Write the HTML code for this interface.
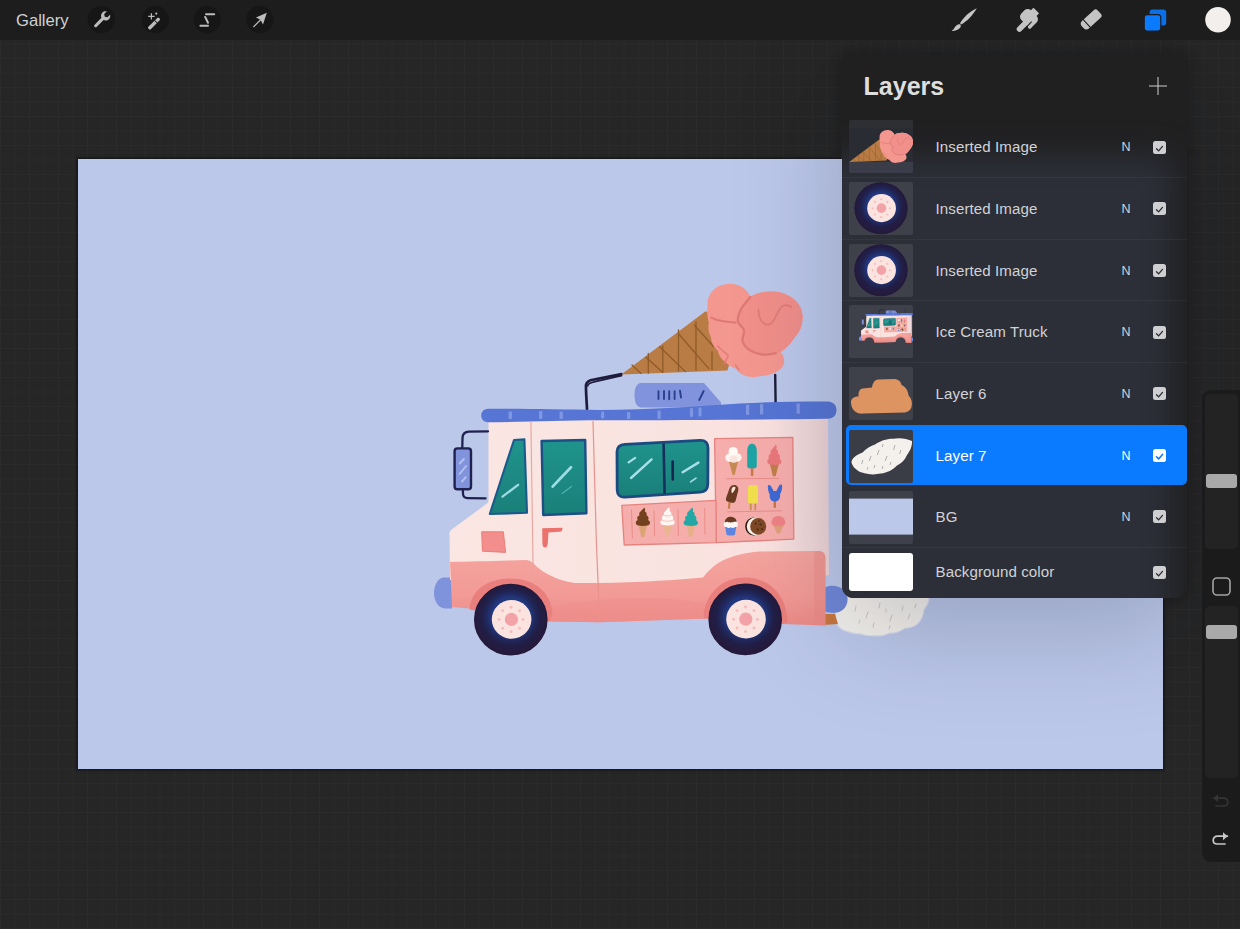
<!DOCTYPE html>
<html lang="en">
<head>
<meta charset="utf-8">
<title>Procreate - Ice Cream Truck</title>
<style>
*{box-sizing:border-box;margin:0;padding:0}
html,body{width:1240px;height:929px;overflow:hidden;background:#262626}
body{position:relative;font-family:"Liberation Sans",Arial,sans-serif;color:#d9d9dc}
#grid{position:absolute;left:0;top:0;width:1240px;height:929px;
 background-color:#262626;
 background-image:linear-gradient(to right,#2b2b2b 1px,transparent 1px),linear-gradient(to bottom,#2b2b2b 1px,transparent 1px);
 background-size:14.5px 14.5px;background-position:0px 0px}
#canvas{position:absolute;left:78px;top:159px;width:1085px;height:610px;background:#bcc8ea;box-shadow:0 0 2.5px 1px rgba(12,14,20,.85)}
#art{position:absolute;left:0;top:0;width:1240px;height:929px}
#topbar{position:absolute;left:0;top:0;width:1240px;height:40px;background:#1d1d1d}
#gallery{position:absolute;left:16px;top:11.2px;font-size:16.6px;line-height:20px;color:#d2d2d2}
.tb{position:absolute;top:0;left:0;width:1240px;height:40px}
/* layers panel */
#pshadow{position:absolute;left:842px;top:55px;width:345px;height:543px;border-radius:12px;box-shadow:0 30px 110px 0 rgba(15,18,40,.21)}
#pfuzz{position:absolute;left:842px;top:55px;width:345px;height:140px;border-radius:12px 12px 0 0;box-shadow:0 0 9px 3px rgba(29,29,30,.8);clip-path:inset(-20px -20px 40px -20px)}
#pfuzz2{position:absolute;left:1163px;top:150px;width:24px;height:448px;border-radius:0 0 12px 0;box-shadow:0 0 9px 3px rgba(27,27,28,.8);clip-path:inset(0 -20px -20px 1px)}
#panel{position:absolute;left:842px;top:55px;width:345px;height:543px;border-radius:12px;background:#202021;overflow:hidden}
#ptint{position:absolute;left:-30px;top:101px;width:360px;height:490px;background:#2c2f38;filter:blur(15px)}
#ptitle{position:absolute;left:21.6px;top:17px;font-size:25px;font-weight:bold;line-height:28px;color:#dedede}
.row{position:absolute;left:0;width:345px;height:61.7px;border-top:1px solid rgba(255,255,255,.045)}
.row .th{position:absolute;left:7.4px;top:4.2px;width:64px;height:53px;background:#3e404a;border-radius:2px;overflow:hidden}
.row .nm{position:absolute;left:93.6px;top:21px;font-size:15.1px;letter-spacing:.08px;line-height:20px;color:#d2d2d6;white-space:nowrap}
.row .n{position:absolute;left:279.5px;top:24px;font-size:12.5px;line-height:14px;color:#d2d2d6}
.row .cb{position:absolute;left:311px;top:24.5px;width:13px;height:13px;border-radius:2.5px;background:#cfcfd1}
.row.sel{background:#0a7aff;border-radius:5px;border-top:none;left:4px;width:341px}
.row.sel .th{left:3.4px;top:5px;background:#3a3c46}
.row.sel .nm{left:89.6px;color:#fff}
.row.sel .n{left:275.5px;color:#fff}
.row.sel .cb{left:307px;background:#fff}
/* sidebar */
#side{position:absolute;left:1202px;top:390px;width:38px;height:472px;background:#1b1b1b;border-radius:9px 0 0 9px}
.trk{position:absolute;left:2.5px;width:33px;background:#232323;border-radius:5px}
.thm{position:absolute;left:3.5px;width:31px;height:14px;background:#a9a9a9;border-radius:3px}
</style>
</head>
<body>
<div id="grid"></div>
<div id="canvas"></div>
<svg id="art" viewBox="0 0 1240 929">
<!--ART_S-->
<defs>
 <linearGradient id="gBody" x1="0" y1="0" x2="1" y2="0">
  <stop offset="0" stop-color="#fae6e2"/><stop offset="0.85" stop-color="#f9e2df"/><stop offset="1" stop-color="#ecd3d6"/>
 </linearGradient>
 <linearGradient id="gPink" x1="0" y1="0" x2="0" y2="1">
  <stop offset="0" stop-color="#f5a49f"/><stop offset="0.6" stop-color="#f29a96"/><stop offset="1" stop-color="#ec8a86"/>
 </linearGradient>
 <linearGradient id="gTeal" x1="0" y1="0" x2="0" y2="1">
  <stop offset="0" stop-color="#1f948c"/><stop offset="1" stop-color="#1a7f79"/>
 </linearGradient>
 <radialGradient id="gTire" cx="0.5" cy="0.46" r="0.52">
  <stop offset="0.52" stop-color="#23377e"/><stop offset="0.64" stop-color="#20295f"/><stop offset="0.78" stop-color="#211e46"/><stop offset="1" stop-color="#261a3c"/>
 </radialGradient>
 <g id="wheel">
  <ellipse cx="0" cy="0" rx="36.2" ry="35.2" fill="url(#gTire)"/>
  <ellipse cx="0" cy="0" rx="35.8" ry="34.8" fill="none" stroke="#241a3c" stroke-width="2"/>
  <ellipse cx="0.8" cy="-0.2" rx="19.8" ry="19.4" fill="#fbe4e0"/>
  <circle cx="0.6" cy="-0.2" r="6.6" fill="#f3a3a7"/>
  <g fill="#f5bcb9">
   <circle cx="12.2" cy="0" r="1.45"/><circle cx="-11.6" cy="0" r="1.45"/><circle cx="0.3" cy="12.2" r="1.45"/><circle cx="0.3" cy="-12.4" r="1.45"/>
   <circle cx="8.8" cy="8.6" r="1.45"/><circle cx="-8.2" cy="8.6" r="1.45"/><circle cx="8.8" cy="-8.8" r="1.45"/><circle cx="-8.2" cy="-8.8" r="1.45"/>
  </g>
 </g>
</defs>

<!-- smoke (Layer 7) -->
<g id="smoke">
 <path d="M836 611 C837 601 848 594 860 596 C872 588 892 588 902 593 C912 590 926 593 929 599 C929.6 603 926 606 924 610 C923.6 615 921.6 619 919.4 622 C916 626.6 910 628 904.6 628.4 C900 632 894 633.4 889 633.2 C885 635.6 880 636.2 876 635.8 C870 636 864 635.4 860 633.8 C855 634 851 633.2 848 631.6 C843 630.6 839.4 628.4 837.8 625.4 C835.4 621.6 835 616 836 611 Z" fill="#f3f0ec" stroke="#d9dcee" stroke-width="1.2"/>
 <g stroke="#cdc9c4" stroke-width="1" fill="none" stroke-linecap="round">
  <path d="M856 606l-1 5M868 612l-2 6M880 603l-1 5M892 615l-2 6M903 606l-1 5M910 614l-2 5M874 623l-1 4M860 620l-1 3M890 626l-1 3M916 604l-1 4M886 609l0 3"/>
 </g>
</g>
<!-- orange (Layer 6) -->
<g id="orange">
 <path d="M825 614 L835 614 L838 624 L823 625 Z" fill="#c9773f"/>
</g>

<!-- truck -->
<g id="truck">
 <!-- bumpers -->
 <path d="M452 577.5 L443 577.5 C437 579 434 586 434 593 C434 601 438 608 445 608.5 L452 608.5 Z" fill="#7f93dc"/>
 <path d="M825 587.4 C828 585.6 832.6 585.4 836.4 586.2 C843.4 587.8 847.8 593.2 847.6 599.6 C847.4 607 842 612.8 834.6 612.8 C831 612.8 827.6 612.4 825 611.4 Z" fill="#6f87d7"/>
 <!-- antennas -->
 <path d="M587 409 C586.6 400 585.8 392 586 385 C586.5 381 590 380 594 379.5 L621.5 374.2" fill="none" stroke="#1d1a3b" stroke-width="2.7" stroke-linecap="round" stroke-linejoin="round"/>
 <path d="M587.6 386 C588 383.5 591 382.4 595 381.6 L621.5 375.6" fill="none" stroke="#1d1a3b" stroke-width="1.6" stroke-linecap="round"/>
 <path d="M775.2 375 L775.6 402" fill="none" stroke="#1d1a3b" stroke-width="2.4" stroke-linecap="round"/>
 <!-- roof box -->
 <path d="M641 383 L704 383 L721 402.5 L721 407.5 L641 407.5 C636.5 407 634.5 402 634.5 395 C634.5 388 636.5 383.5 641 383 Z" fill="#8193dc"/>
 <g stroke="#29408f" stroke-width="1.9" stroke-linecap="round">
  <path d="M658.5 391.3V399M664 391V399M669.2 391.3V399.3M674.6 391.3V399M680 390.6L681 397.5M703.7 391L699.2 400"/>
 </g>
 <!-- body cream -->
 <path d="M488.5 419 L828 417 L829 575 L600 602 L450 580 L449.5 534 C449.5 531.5 450.5 530.5 452 529.3 L487 503.5 C488 502.7 488.5 501.7 488.5 500.5 Z" fill="url(#gBody)"/>
 <!-- pink lower -->
 <path d="M450 562 C470 561.5 500 561 527 560 C531 560.5 533 563 536 566 C545 574 558 580.5 575 583 C610 583.5 660 581.5 703 577.5 C707 572 712 567 719 562.5 C730 556 745 552.5 760 551.5 L818 551 C823 551 825.5 553.5 825.5 558 L825.5 625.5 L781 624 L708 618.5 L600 622.3 L549 621.5 L475 609 L452 607 Z" fill="url(#gPink)"/>
 <!-- pink shading -->
 <path d="M600 600 C640 597 680 598 705 604 L708 618.5 L600 622.3 L549 621.5 L549 607 C565 605 580 602 600 600 Z" fill="#ee8e8a" opacity=".55"/>
 <path d="M814 551.2 L818 551 C823 551 825.5 553.5 825.5 558 L825.5 625.5 L814 625.2 Z" fill="#ec8783" opacity=".4"/>
 <!-- wheel arches -->
 <path d="M469.5 609.5 C470.5 590 488 578.6 510.6 578.6 C533 578.6 551 591 552.5 614 L549 621.5 L475 610.5 Z" fill="#e9807d"/>
 <path d="M703.6 618.2 C704 594 722 577.4 745 577.4 C768 577.4 787 594 787.6 622 L781 624 L708 618.5 Z" fill="#e9807d"/>
 <!-- roof -->
 <path d="M488 408.8 C520 408.6 560 409.4 600 410 C650 410 700 406 740 403.5 C770 402 800 401.5 828 401.6 C834 402 836.5 406 836.5 410 C836.5 415 833.5 418.5 828 418.8 C760 419.8 680 420.3 600 420.3 C560 420.5 520 421.8 488 422.3 C483.5 422 481.2 419 481.2 415.5 C481.2 412 483.5 409.2 488 408.8 Z" fill="#5675d4"/>
 <g fill="#8a9fe6" opacity=".8">
  <rect x="508.5" y="411.5" width="3.6" height="7.5" rx="1"/><rect x="539" y="411" width="3.4" height="8" rx="1"/><rect x="559.5" y="411.5" width="3.4" height="7.5" rx="1"/>
  <rect x="601" y="411.5" width="3.2" height="7" rx="1"/><rect x="627" y="412" width="3.2" height="7" rx="1"/><rect x="657.5" y="410.5" width="3.2" height="8.5" rx="1"/>
  <rect x="690" y="408" width="3" height="9" rx="1"/><rect x="698.5" y="407.5" width="3" height="9" rx="1"/><rect x="746" y="404.5" width="3.2" height="10.5" rx="1"/>
  <rect x="760" y="404" width="3.2" height="10.5" rx="1"/><rect x="796.6" y="403.2" width="3.2" height="10.5" rx="1"/>
 </g>
 <!-- door lines -->
 <path d="M530.9 422 L533.3 583" stroke="#eaa39d" stroke-width="1.1" fill="none"/>
 <path d="M593 421 L596.3 540 L599.6 621" stroke="#e8938d" stroke-width="1.2" fill="none"/>
 <!-- mirror -->
 <path d="M488 431.3 L469 431.6 C464.5 431.8 462.6 434 462.5 438 L462.3 448" fill="none" stroke="#1f2250" stroke-width="2.3" stroke-linecap="round"/>
 <path d="M462.8 489 L463 494 C463.2 497 464.5 498 467.5 498.1 L485.5 498.4" fill="none" stroke="#1f2250" stroke-width="2.3" stroke-linecap="round"/>
 <rect x="454.6" y="448.4" width="16.4" height="40.8" rx="2.8" fill="#8193db" stroke="#1f2250" stroke-width="2.4"/>
 <path d="M459.8 463.5l4-4.5M459.6 474l6.4-8M462 481.5l3.6-4.2" stroke="#b3c0ee" stroke-width="2" stroke-linecap="round" fill="none"/>
 <!-- cab windows -->
 <path d="M514 440 L524.4 439.4 L527 512.8 L489.8 514 Z" fill="url(#gTeal)" stroke="#1b5a8c" stroke-width="2.1" stroke-linejoin="round"/>
 <path d="M502.5 496.6l15.6-11.8" stroke="#9edbe4" stroke-width="2.3" stroke-linecap="round"/>
 <path d="M541.6 441 L585.2 440 L586.4 513.3 L543.2 515 Z" fill="url(#gTeal)" stroke="#1b4f86" stroke-width="2.4" stroke-linejoin="round"/>
 <path d="M552.6 486.6l18.4-19.4" stroke="#9edbe4" stroke-width="2.8" stroke-linecap="round"/>
 <path d="M562 493.4l9.6-7" stroke="#4fb3b0" stroke-width="1.2" stroke-linecap="round"/>
 <!-- door handle -->
 <path d="M542.2 528.2 L562.7 527.8 L561.6 531.6 L548.4 532.6 L547.8 543 C547.5 546 546.5 547.6 545 547.6 C543.4 547.6 542.6 546 542.4 543.5 Z" fill="#ea716c"/>
 <!-- hood square -->
 <path d="M481.7 531.8 L503.4 531.8 L505.6 552.4 L482.4 551.2 Z" fill="#f28e8b" stroke="#e67873" stroke-width="0.9"/>
 <!-- big window -->
 <path d="M625 444.3 L700 440.4 C705.5 440.2 708 443 708 448 L707.8 484 C707.8 489 705.5 491.8 700 492.2 L625 497.2 C620 497.5 617.3 495 617.2 490 L617 452 C617 447 619.5 444.6 625 444.3 Z" fill="url(#gTeal)" stroke="#1b4a80" stroke-width="2.8" stroke-linejoin="round"/>
 <path d="M663.6 443.5 L664.6 494" stroke="#16305e" stroke-width="2.6" fill="none"/>
 <path d="M672.6 461.5 L672.8 479.5" stroke="#1a2450" stroke-width="2.6" stroke-linecap="round" fill="none"/>
 <g stroke="#a8dfe9" stroke-linecap="round" fill="none">
  <path d="M628.6 462.4l6.6-4.6" stroke-width="2.2"/><path d="M631 478l20.6-18.6" stroke-width="2.4"/>
  <path d="M682.6 472.2l15.8-9.6" stroke-width="2.4"/><path d="M690.6 481.8l5.4-3.6" stroke-width="1.6"/>
 </g>
 <!-- menu panels -->
 <path d="M714.6 438.6 L792.8 437.4 L793.8 539.2 L716.2 542.6 Z" fill="#f6aeac" stroke="#e5827e" stroke-width="1.3" stroke-linejoin="round"/>
 <path d="M621.8 505.4 L716 500.4 L716.2 542.6 L624.2 545 Z" fill="#f6aeac" stroke="#e5827e" stroke-width="1.3" stroke-linejoin="round"/>
 <g stroke="#e88d89" stroke-width="1" fill="none">
  <path d="M726 478.8L779.2 478.4M727 511.9L782 510.8"/>
  <path d="M631.5 509.5L632.4 538.5M654 510.5L654.6 536M678 509.5L678.4 536M704.6 508L705 534.5"/>
 </g>
 <!-- menu items row 1 -->
 <path d="M729 462 L738 462 L734.6 475 L732.6 475 Z" fill="#c68a55"/>
 <circle cx="729.4" cy="457.6" r="4.2" fill="#fdf3ee"/><circle cx="737.4" cy="457.4" r="4.2" fill="#fdf3ee"/><circle cx="733.2" cy="451.6" r="4.6" fill="#fffaf6"/><circle cx="733.6" cy="459" r="3.8" fill="#f8e6de"/>
 <rect x="750.8" y="466" width="2.6" height="10" rx="1" fill="#c97a4a"/>
 <path d="M747.2 451 C747.2 446.4 749.2 443.8 752 443.8 C754.8 443.8 756.8 446.4 756.8 451 L756.8 465.4 C756.8 467.4 755.6 468.2 754.4 468.2 L749.6 468.2 C748.2 468.2 747.2 467.4 747.2 465.4 Z" fill="#1fa5a6"/>
 <path d="M769.5 462.6 L779.0999999999999 462.6 L775.6999999999999 476.20000000000005 L772.9 476.20000000000005 Z" fill="#c27f4c"/>
 <path d="M775.9 444.6 C774.6999999999999 446.40000000000003 773.0999999999999 447.6 772.0999999999999 449.40000000000003 C770.5 450.20000000000005 770.0999999999999 452.0 770.9 453.40000000000003 C768.5 454.20000000000005 767.9 457.0 769.0999999999999 458.6 C766.6999999999999 459.6 766.6999999999999 463.20000000000005 768.9 464.20000000000005 C772.3 465.20000000000005 776.6999999999999 465.20000000000005 779.9 464.20000000000005 C782.0999999999999 463.20000000000005 781.6999999999999 459.6 779.5 458.6 C780.6999999999999 456.8 779.9 454.20000000000005 777.9 453.40000000000003 C778.6999999999999 451.6 777.9 449.8 776.3 449.20000000000005 C776.9 447.6 776.6999999999999 446.0 775.9 444.6 Z" fill="#ea787c"/>
 <!-- row 2 -->
 <path d="M728.6 500.6 L731 501.2 L729.8 509 L727.8 508.6 Z" fill="#c67c4c"/>
 <path d="M729.6 488 C730.6 485.4 733.6 484.4 735.8 485.2 C738 486 738.8 488.4 738.2 490.8 L735.6 500.8 C735 502.6 733.4 503.2 731.8 502.8 L727.6 501.6 C726.2 501.2 725.6 499.8 726 498.2 Z" fill="#6b3a22"/>
 <path d="M731.8 488.4 C732.6 486.6 735 486.4 735.6 487.6 C735.2 489.6 733.6 492.6 732 493.2 C731.2 492 731.4 490 731.8 488.4 Z" fill="#f9e6d6"/>
 <rect x="749.8" y="501" width="1.8" height="9.2" fill="#c6904c"/><rect x="754.4" y="501" width="1.8" height="9.2" fill="#c6904c"/>
 <path d="M748 488 C748 486 749.4 485 751 485 C752 485 752.6 485.4 753 486 C753.4 485.4 754.2 485 755.2 485 C756.8 485 758 486 758 488 L758 501.6 C758 503 757.2 503.6 756 503.6 L750 503.6 C748.8 503.6 748 503 748 501.6 Z" fill="#f2df4c"/>
 <rect x="773.6" y="499" width="2.4" height="9" rx="1" fill="#c6784a"/>
 <path d="M768 485.4 C769.4 484.4 771 485.6 772 488 L773.6 491 L776.4 491 L778.4 487 C779.4 484.6 781 484 782 485 C782.6 488 781.4 492 780 494.6 C780.8 498 778.6 501.6 774.8 501.6 C771 501.6 769 498 769.8 494.6 C768.4 492 767.4 488 768 485.4 Z" fill="#3f69d6"/>
 <!-- row 3 -->
 <path d="M725 526 L736.4 526 L735 534 C734.8 535 734 535.4 733 535.4 L728.4 535.4 C727.4 535.4 726.6 535 726.4 534 Z" fill="#5e86e0"/>
 <path d="M723.8 524.4 C724 520.6 727 518.6 730.8 518.6 C734.6 518.6 737.6 520.6 737.8 524.4 C737.8 526.4 736.4 527.4 735 527 C734 528.2 732 528.2 730.8 527.2 C729.6 528.2 727.6 528.2 726.6 527 C725.2 527.4 723.8 526.4 723.8 524.4 Z" fill="#fdf6f2"/>
 <path d="M724.6 522.6 C725 518.6 728 516.6 731 516.8 C734 517 736.6 519 736.8 522 C735.8 521.2 735 522.4 734 521.4 C733 523 731.6 521.6 730.6 522.8 C729.6 521.4 728 523 727 521.6 C726.2 522.8 725.4 522 724.6 522.6 Z" fill="#6a3a20"/>
 <ellipse cx="753.4" cy="526.4" rx="8.2" ry="9" fill="#2e1a10"/>
 <ellipse cx="755" cy="526.4" rx="8.2" ry="8.8" fill="#fbf1ea"/>
 <ellipse cx="758.2" cy="526.4" rx="8" ry="8.4" fill="#7d4826"/>
 <g fill="#4a2a16"><circle cx="755.6" cy="523.4" r="1"/><circle cx="760.6" cy="524.4" r="1"/><circle cx="757.6" cy="529.4" r="1"/><circle cx="762" cy="529" r=".9"/><circle cx="759" cy="521" r=".8"/></g>
 <path d="M773 524.6 L784 524.6 L780 533.4 L777 533.4 Z" fill="#e0a07c"/>
 <path d="M771.6 522.6 C771.4 518.6 774.6 516 778.4 516 C782.2 516 785.4 518.6 785.2 522.6 C785.2 524.6 784 525.6 782.6 525.2 C781.6 526.4 779.6 526.4 778.4 525.4 C777.2 526.4 775.2 526.4 774.2 525.2 C772.8 525.6 771.6 524.6 771.6 522.6 Z" fill="#f08387"/>
 <!-- bottom-left soft serves -->
 <path d="M638.1999999999999 523.8 L647.4 523.8 L644.3 537.0 L641.3 537.0 Z" fill="#dba476"/>
 <path d="M644.4 507.4 C643.1999999999999 509.0 641.5999999999999 510.0 640.5999999999999 511.59999999999997 C639.1999999999999 512.4 638.8 514.0 639.5999999999999 515.1999999999999 C637.1999999999999 516.0 636.5999999999999 518.4 637.8 520.0 C635.1999999999999 521.0 635.0 524.1999999999999 637.4 525.1999999999999 C640.8 526.1999999999999 645.1999999999999 526.1999999999999 648.4 525.1999999999999 C650.8 524.1999999999999 650.4 521.0 648.0 520.0 C649.1999999999999 518.4 648.4 516.0 646.4 515.1999999999999 C647.1999999999999 513.6 646.4 512.0 644.8 511.4 C645.4 510.0 645.1999999999999 508.59999999999997 644.4 507.4 Z" fill="#74411f"/>
 <path d="M662.9 523.4 L672.1 523.4 L669.0 536.6 L666.0 536.6 Z" fill="#eab690"/>
 <path d="M669.1 507 C667.9 508.6 666.3 509.6 665.3 511.2 C663.9 512 663.5 513.6 664.3 514.8 C661.9 515.6 661.3 518 662.5 519.6 C659.9 520.6 659.7 523.8 662.1 524.8 C665.5 525.8 669.9 525.8 673.1 524.8 C675.5 523.8 675.1 520.6 672.7 519.6 C673.9 518 673.1 515.6 671.1 514.8 C671.9 513.2 671.1 511.6 669.5 511 C670.1 509.6 669.9 508.2 669.1 507 Z" fill="#fff6f2"/>
 <path d="M661.6 520.2 C665 521.6 670 521.6 673 520.2M663.6 515.2C666 516.2 669.4 516.2 671.4 515.2" stroke="#f3c2be" stroke-width="1" fill="none"/>
 <path d="M686.1 523.8 L695.3000000000001 523.8 L692.2 537.0 L689.2 537.0 Z" fill="#e8b088"/>
 <path d="M692.3000000000001 507.4 C691.1 509.0 689.5 510.0 688.5 511.59999999999997 C687.1 512.4 686.7 514.0 687.5 515.1999999999999 C685.1 516.0 684.5 518.4 685.7 520.0 C683.1 521.0 682.9000000000001 524.1999999999999 685.3000000000001 525.1999999999999 C688.7 526.1999999999999 693.1 526.1999999999999 696.3000000000001 525.1999999999999 C698.7 524.1999999999999 698.3000000000001 521.0 695.9000000000001 520.0 C697.1 518.4 696.3000000000001 516.0 694.3000000000001 515.1999999999999 C695.1 513.6 694.3000000000001 512.0 692.7 511.4 C693.3000000000001 510.0 693.1 508.59999999999997 692.3000000000001 507.4 Z" fill="#22a7a4"/>
</g>

<!-- wheels -->
<use href="#wheel" x="510.8" y="619.6"/>
<use href="#wheel" x="745.2" y="619.4"/>

<!-- cone (Inserted Image) -->
<g id="cone">
 <path d="M621.3 374.6 L705.6 311.2 L740 330 L727.4 370.4 Z" fill="#b97c44"/>
 <g stroke="#8f5b29" stroke-width="1.3" fill="none" stroke-linecap="round">
  <path d="M648.3 353.4V373.2M662.8 346V372.6M678.5 329.8V371M696 321.8V370.2M712 352V369.4"/>
  <path d="M632 365L641 373.4M646 357.2L662 371.8M659.6 346.8L685.4 371.6M678.5 333.8L708.8 368.6M694.3 325L713.7 346.8"/>
 </g>
 <path d="M707.7 305.8 C706.4 293.6 716.4 283.8 730 283.8 C739.4 283.8 747.2 288.8 750.3 296.9 C756 293 764.6 291 773.4 291.6 C790.6 292.6 803 304 802.6 317.4 C802.4 326 799.4 332.6 794.7 337.4 C791 343.4 785.8 348.6 780.5 352 C784 355.6 785 360.6 783.5 365 C780 371.6 770.6 375.8 759.2 376.2 C754.6 377.6 749.6 377.4 745 375.7 C741 374.4 737.8 371.8 735.5 368.5 C731.6 367.6 728.2 365.6 726 362.6 C721.6 360 718.8 355.8 717.8 350.8 C713.6 347.4 711.2 342.4 710.7 336.6 C708.4 332.4 707.8 327.4 708.9 322.4 C707.2 317.2 706.8 311.4 707.7 305.8 Z" fill="#f4978f"/>
 <path d="M750.3 296.9 C756 293 764.6 291 773.4 291.6 C790.6 292.6 803 304 802.6 317.4 C802.4 326 799.4 332.6 794.7 337.4 C791 343.4 785.8 348.6 780.5 352 L775.8 353.2 C769 355.6 757 354.6 750.9 350.8 C745 347 741 342 743.2 335.6 C744.8 332.4 745.4 330.8 743.8 329.5 C739.6 327 737 323.6 737.9 321.2 C739 315 744 305 750.3 296.9 Z" fill="#f18f8a"/>
 <g stroke="#df7976" stroke-width="2.3" fill="none" stroke-linecap="round" stroke-linejoin="round">
  <path d="M750.3 296.9 C746 302 742 306.6 740.3 310.5 C738.6 314 737.4 318 737.9 321.2 C738.6 325 742.4 326.6 743.8 329.5 C745.2 333 741.6 337 742.6 341.3 C743.8 345.6 747 348.6 750.9 350.8 C754 352.6 757.6 353.8 761.6 354.3 C766.4 355 771.4 354.4 775.8 353.2"/>
  <path d="M711.2 317.6 C715 319.8 719.4 320.8 723.7 321.2 C727.6 321.6 731.6 322.2 735.5 322.4" stroke-width="2"/>
  <path d="M758.6 309.3 C758.4 314.4 759.6 319.4 762.8 322.4 C765.4 324.8 768.6 325.2 771 323.5 C774 321 775 317.4 777 314 C778.6 310.8 780.2 307.4 782.9 305.8 C785.6 304.6 788.8 305.2 791.2 307" stroke-width="1.7" opacity=".9"/>
  <path d="M717.8 346 C721 349.6 725 352.6 728.4 355.5 C727 358.4 725.4 361 724.3 363.8M735.5 365 C736.6 366.8 737.8 368.4 739 369.7" stroke-width="1.6" opacity=".85"/>
 </g>
</g>

<!--ART_E-->
</svg>
<div id="pshadow"></div>
<div id="pfuzz"></div><div id="pfuzz2"></div>
<div id="topbar"></div>
<div id="gallery">Gallery</div>
<svg class="tb" viewBox="0 0 1240 40">
<!--TOPICONS_S-->
 <g fill="#161616">
  <circle cx="101.3" cy="19.6" r="13.6"/><circle cx="155.3" cy="19.6" r="13.6"/><circle cx="207.3" cy="19.6" r="13.6"/><circle cx="259.8" cy="19.6" r="13.6"/>
 </g>
 <!-- wrench -->
 <g transform="translate(101.6 19.9) rotate(45) scale(.9)">
  <path d="M-1.7 -1.5 L-1.7 9.2 C-1.7 10.4 -0.9 11 0 11 C0.9 11 1.7 10.4 1.7 9.2 L1.7 -1.5 C3.9 -2.3 5.2 -4.3 5.2 -6.4 C5.2 -8.2 4.2 -9.9 2.6 -10.7 L2.6 -6.6 L0 -5 L-2.6 -6.6 L-2.6 -10.7 C-4.2 -9.9 -5.2 -8.2 -5.2 -6.4 C-5.2 -4.3 -3.9 -2.3 -1.7 -1.5 Z" fill="#bcbcbc"/>
 </g>
 <!-- wand -->
 <g transform="translate(155.3 19.6) rotate(45)">
  <rect x="-0.4" y="-4.4" width="3.4" height="15" rx="1.2" fill="#bcbcbc" transform="translate(0.6 0.6)"/>
  <rect x="0" y="0.6" width="3.8" height="0.9" fill="#171717"/>
 </g>
 <path d="M151.4 13.2v6.4M148.2 16.4h6.4" stroke="#bcbcbc" stroke-width="1.2" fill="none"/>
 <circle cx="156.3" cy="13.6" r="1.1" fill="#bcbcbc"/>
 <!-- S selection -->
 <path d="M206 14.2 L214.2 14.2 M205.2 17 L208 22.8 M200.4 25.8 L208 25.8" stroke="#bcbcbc" stroke-width="2" stroke-linecap="round" fill="none"/>
 <!-- arrow -->
 <path d="M266.8 12.8 L256 17.4 L260 19.6 L253 26.6 L253.8 27.4 L260.8 20.4 L263 24.4 Z" fill="#bcbcbc"/>
 <!-- brush -->
 <path d="M976.9 8.2 C975.2 11.2 972.2 15 970 17.4 C967.2 20.4 963.8 23 961.2 24.4 L960 23.2 C961.4 20.6 964.2 17.2 967.2 14.4 C969.8 12 973.8 9.4 976.9 8.2 Z" fill="#c6c6c6"/>
 <path d="M960.2 24.3 C961.2 25.4 961 27.2 959.4 28.6 C957.4 30.4 954.4 31.2 951.6 30.9 C953.4 29.8 954 28.6 954.8 27.2 C955.8 25.2 958.4 23.6 960.2 24.3 Z" fill="#c6c6c6"/>
 <!-- smudge finger -->
 <g transform="translate(1028 19.5) rotate(45)" fill="#c4c4c4">
  <rect x="-4.5" y="-12.2" width="8" height="5" rx=".8"/>
  <rect x="-9" y="-8.6" width="17.2" height="13.6" rx="4.6"/>
  <rect x="-2" y="-2" width="5.5" height="17.6" rx="2.7"/>
  <rect x="4.4" y="0" width="3.8" height="5.8" rx="1.8"/>
  <path d="M4.05 -1 L4.4 6" stroke="#1d1d1d" stroke-width="1.1" fill="none"/>
 </g>
 <!-- eraser -->
 <g transform="translate(1091 19.65) rotate(-42.5)">
  <path d="M-7.6 -5.1 L8.7 -5.1 C10.2 -5.1 11.2 -4.1 11.2 -2.6 L11.2 2.6 C11.2 4.1 10.2 5.1 8.7 5.1 L-7.6 5.1 C-9.8 5.1 -11.2 3.6 -11.2 1.4 L-11.2 -1.4 C-11.2 -3.6 -9.8 -5.1 -7.6 -5.1 Z" fill="#c4c4c4"/>
  <path d="M-5.7 -5.6 V5.6" stroke="#1d1d1d" stroke-width="1.1"/>
 </g>
 <!-- layers -->
 <rect x="1149.6" y="9.4" width="16.6" height="16" rx="3" fill="#0b6fe8"/>
 <rect x="1144.2" y="14.6" width="16.6" height="16.6" rx="3" fill="#0a7aff" stroke="#1d1d1d" stroke-width="1.2"/>
 <!-- color -->
 <circle cx="1218" cy="19.8" r="12.8" fill="#f3efec"/>
<!--TOPICONS_E-->
</svg>
<div id="panel">
 <div id="ptint"></div>
 <div id="ptitle">Layers</div>
 <svg style="position:absolute;left:306px;top:20.8px" width="20" height="20" viewBox="0 0 20 20"><path d="M10 1v18M1 10h18" stroke="#cfcfcf" stroke-width="1" fill="none"/></svg>
<!--ROWS_S-->
 <div class="row" style="top:60.1px;border-top-color:transparent">
  <div class="th" style="background:linear-gradient(#2e2f33 0%,#2d2f35 60%,#3a3c48 80%,#3c3d4a 100%)"><svg width="64" height="53" viewBox="0 0 64 53"><rect x="0" y="8" width="64" height="33.6" fill="#2a2c33"/><g transform="translate(-218.5 -89.8) scale(0.352)"><use href="#cone"/></g></svg></div>
  <div class="nm">Inserted Image</div><div class="n">N</div><div class="cb"><svg width="13" height="13" viewBox="0 0 13 13"><path d="M3.5 6.8l2.1 2.1 3.9-4.5" stroke="#2a2c34" stroke-width="1.3" fill="none" stroke-linecap="round" stroke-linejoin="round"/></svg></div>
 </div>
 <div class="row" style="top:121.8px">
  <div class="th"><svg width="64" height="53" viewBox="0 0 64 53"><g transform="translate(32 26.3) scale(0.725)"><use href="#wheel"/></g></svg></div>
  <div class="nm">Inserted Image</div><div class="n">N</div><div class="cb"><svg width="13" height="13" viewBox="0 0 13 13"><path d="M3.5 6.8l2.1 2.1 3.9-4.5" stroke="#2a2c34" stroke-width="1.3" fill="none" stroke-linecap="round" stroke-linejoin="round"/></svg></div>
 </div>
 <div class="row" style="top:183.5px">
  <div class="th"><svg width="64" height="53" viewBox="0 0 64 53"><g transform="translate(32 26.3) scale(0.725)"><use href="#wheel"/></g></svg></div>
  <div class="nm">Inserted Image</div><div class="n">N</div><div class="cb"><svg width="13" height="13" viewBox="0 0 13 13"><path d="M3.5 6.8l2.1 2.1 3.9-4.5" stroke="#2a2c34" stroke-width="1.3" fill="none" stroke-linecap="round" stroke-linejoin="round"/></svg></div>
 </div>
 <div class="row" style="top:245.2px">
  <div class="th"><svg width="64" height="53" viewBox="0 0 64 53"><g transform="translate(-48.2 -45.8) scale(0.134)"><use href="#truck"/><ellipse cx="510.8" cy="619.6" rx="37" ry="36" fill="#3e404a"/><ellipse cx="745.2" cy="619.4" rx="37" ry="36" fill="#3e404a"/></g></svg></div>
  <div class="nm">Ice Cream Truck</div><div class="n">N</div><div class="cb"><svg width="13" height="13" viewBox="0 0 13 13"><path d="M3.5 6.8l2.1 2.1 3.9-4.5" stroke="#2a2c34" stroke-width="1.3" fill="none" stroke-linecap="round" stroke-linejoin="round"/></svg></div>
 </div>
 <div class="row" style="top:306.9px">
  <div class="th"><svg width="64" height="53" viewBox="0 0 64 53"><path d="M2 36 C1.6 31.6 5 29.4 9.6 29.6 C9 25 11 21.6 14 21.6 L23 20.6 C23.6 15.6 26 12.6 29 12.4 L46 12 C50 12.6 52 15 52.6 18 C56.6 19.6 59 23.6 59.6 28.6 C62.6 31.6 63.4 36 62.6 39.6 C62 43 59 45 56 45.4 L14 46.6 C7 47 2.6 43 2 36 Z" fill="#de9461"/></svg></div>
  <div class="nm">Layer 6</div><div class="n">N</div><div class="cb"><svg width="13" height="13" viewBox="0 0 13 13"><path d="M3.5 6.8l2.1 2.1 3.9-4.5" stroke="#2a2c34" stroke-width="1.3" fill="none" stroke-linecap="round" stroke-linejoin="round"/></svg></div>
 </div>
 <div class="row sel" style="top:369.5px;height:60.4px">
  <div class="th"><svg width="64" height="53" viewBox="0 0 64 53"><path d="M2.4 32 C3.6 27 9 24.6 13.6 22.6 C17 18.6 22 16 26 14.6 C31 11 38 8.6 44 8.8 C50 7.4 58 8.4 63 11 C63.4 16 61 21 58 25 C56 30 52 33.6 48 35.6 C44 40 38 43 32 43.6 C26 45 18 44.6 13 42.6 C8 41 3.4 37 2.4 32 Z" fill="#f4f0ec"/><path d="M14 30l-1.4 4M22 26l-1.6 5M30 20l-1.6 5M38 26l-1.8 5M46 15l-1.4 5M52 20l-1.4 4M26 35l-1 3M42 32l-1 3M34 14l-.6 3M19 37l-.8 2.6M34 36l-1 3" stroke="#aaa6a8" stroke-width=".9" fill="none"/></svg></div>
  <div class="nm">Layer 7</div><div class="n">N</div><div class="cb"><svg width="13" height="13" viewBox="0 0 13 13"><path d="M3.5 6.8l2.1 2.1 3.9-4.5" stroke="#0a7aff" stroke-width="1.6" fill="none" stroke-linecap="round" stroke-linejoin="round"/></svg></div>
 </div>
 <div class="row" style="top:430.9px;border-top:none">
  <div class="th" style="top:5.4px"><svg width="64" height="53" viewBox="0 0 64 53"><rect x="0" y="7.6" width="64" height="36" fill="#bcc8ea"/></svg></div>
  <div class="nm">BG</div><div class="n">N</div><div class="cb"><svg width="13" height="13" viewBox="0 0 13 13"><path d="M3.5 6.8l2.1 2.1 3.9-4.5" stroke="#2a2c34" stroke-width="1.3" fill="none" stroke-linecap="round" stroke-linejoin="round"/></svg></div>
 </div>
 <div class="row" style="top:492.0px;height:50px">
  <div class="th" style="top:4.6px;height:38.3px;background:#fff;border-radius:3px"></div>
  <div class="nm" style="top:14px">Background color</div><div class="cb" style="top:17.5px"><svg width="13" height="13" viewBox="0 0 13 13"><path d="M3.5 6.8l2.1 2.1 3.9-4.5" stroke="#2a2c34" stroke-width="1.3" fill="none" stroke-linecap="round" stroke-linejoin="round"/></svg></div>
 </div>
<!--ROWS_E-->
</div>
<div id="side">
 <div class="trk" style="top:3.5px;height:155.5px"></div>
 <div class="thm" style="top:83.5px"></div>
 <svg style="position:absolute;left:9.5px;top:186.5px" width="19" height="19" viewBox="0 0 19 19"><rect x="1" y="1" width="17" height="17" rx="4" fill="none" stroke="#a4a4a4" stroke-width="1.6"/></svg>
 <div class="trk" style="top:216px;height:172px"></div>
 <div class="thm" style="top:235px"></div>
<!--SIDEICONS_S-->
 <svg style="position:absolute;left:9px;top:401px" width="20" height="18" viewBox="0 0 20 18"><path d="M2.6 7.2H12.4C15.2 7.2 16.8 9 16.8 11.2 C16.8 13.4 15.2 15 12.8 15H5" stroke="#343434" stroke-width="1.7" fill="none" stroke-linecap="round"/><path d="M7 3.2L2.4 7.2L7 11.2Z" fill="#343434"/></svg>
 <svg style="position:absolute;left:9px;top:439px" width="20" height="18" viewBox="0 0 20 18"><path d="M16.4 7.2H6.6C3.8 7.2 2.2 9 2.2 11.2 C2.2 13.4 3.8 15 6.2 15H14" stroke="#c8c8c8" stroke-width="1.7" fill="none" stroke-linecap="round"/><path d="M12 3.2L16.6 7.2L12 11.2Z" fill="#c8c8c8"/></svg>
<!--SIDEICONS_E-->
</div>
</body>
</html>
